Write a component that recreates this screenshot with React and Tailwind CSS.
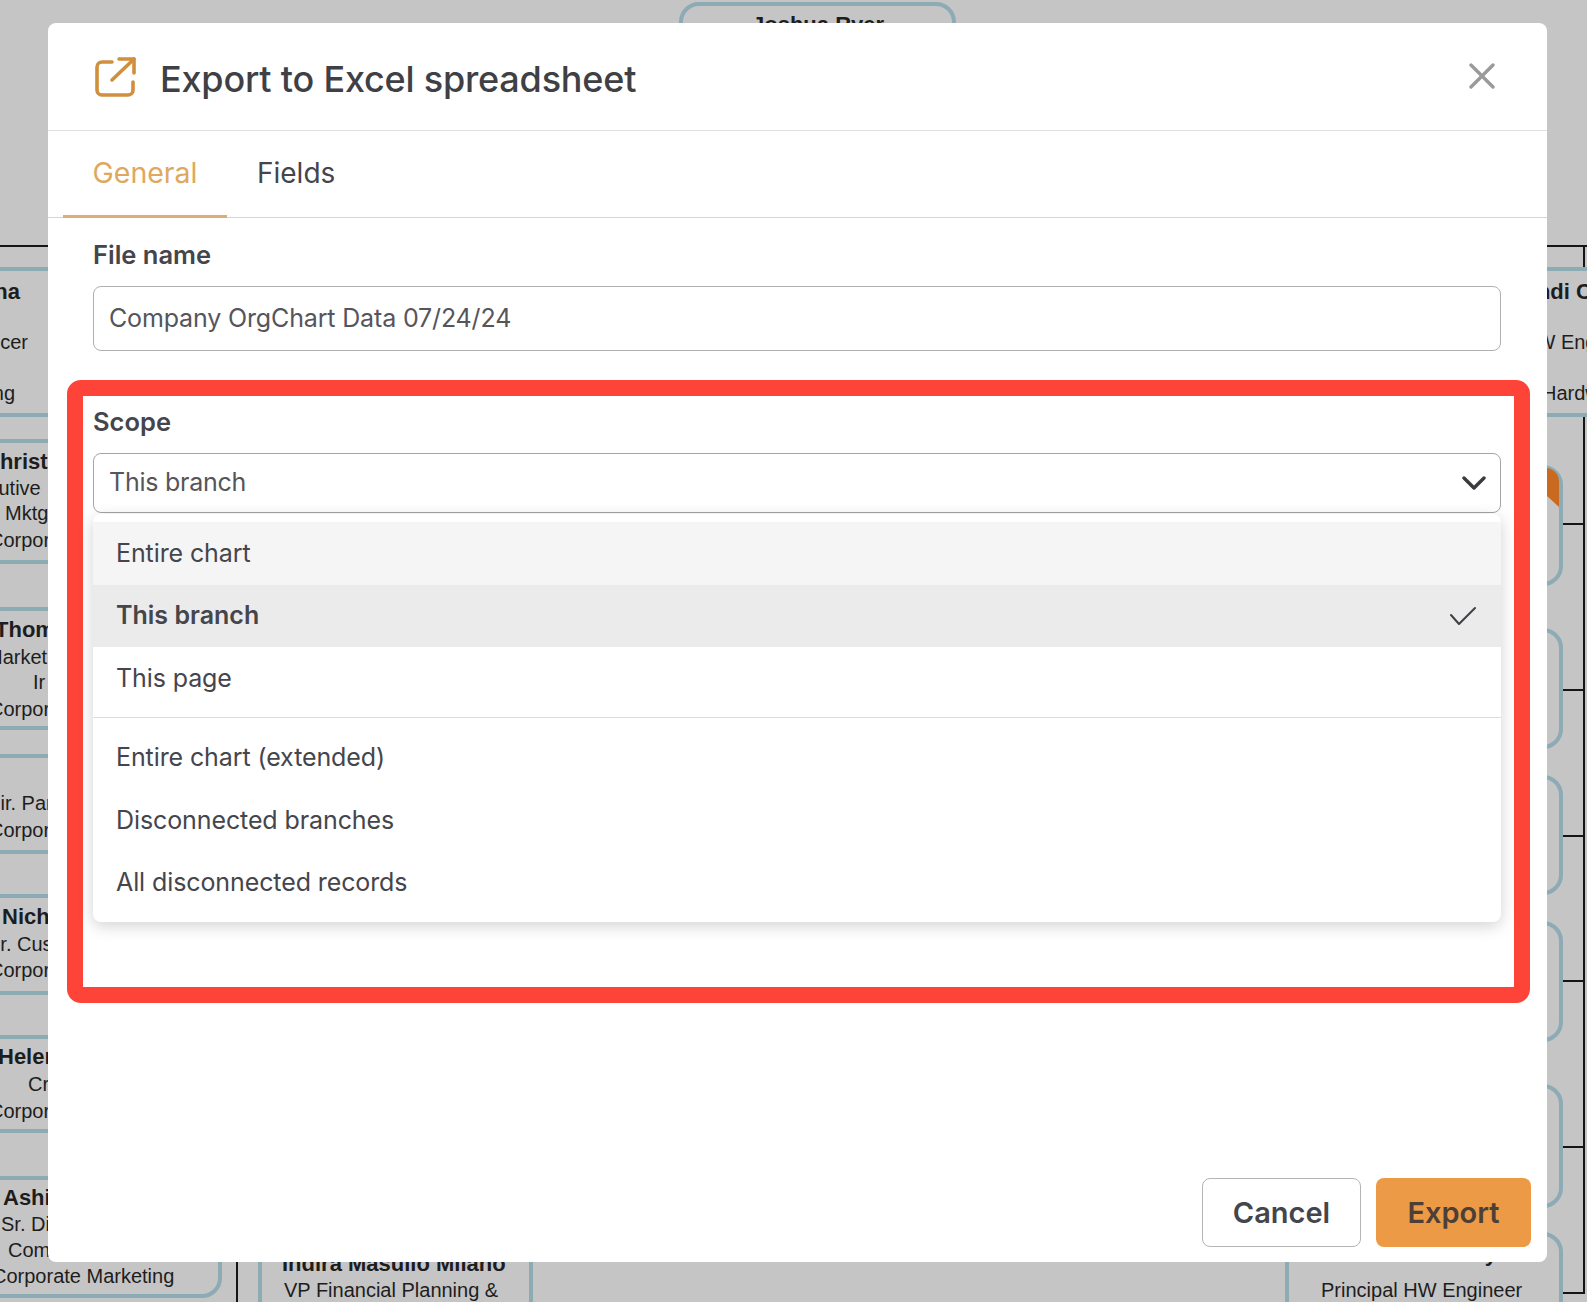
import React from "react";

// org chart behind the dialog, positions are the picture's own canvas
const CARDS = [
  { left: -60, top: 267, w: 282, h: 150 },
  { left: -60, top: 439, w: 282, h: 125 },
  { left: -60, top: 607, w: 282, h: 123 },
  { left: -60, top: 754, w: 282, h: 100 },
  { left: -60, top: 894, w: 282, h: 101 },
  { left: -60, top: 1035, w: 282, h: 98 },
  { left: -60, top: 1176, w: 282, h: 122 },
  { left: 679, top: 2, w: 277, h: 120 },
  { left: 1290, top: 267, w: 360, h: 150 },
  { left: 1290, top: 465, w: 273, h: 121 },
  { left: 1290, top: 628, w: 273, h: 121 },
  { left: 1290, top: 775, w: 273, h: 120 },
  { left: 1290, top: 921, w: 273, h: 121 },
  { left: 1290, top: 1084, w: 273, h: 124 },
  { left: 1285, top: 1232, w: 278, h: 120 },
  { left: 258, top: 1200, w: 275, h: 150 },
];

const LINES = [
  { t: "Joshua Ryer", x: 752, y: 25, b: true },
  { t: "Rebecca Kina", r: 20, y: 292, b: true },
  { t: "Chief Officer", r: 28, y: 342 },
  { t: "Marketing", r: 15, y: 393 },
  { t: "Christ", x: -16, y: 462, b: true },
  { t: "Executive", x: -46, y: 488 },
  { t: "Mktg", x: 5, y: 513 },
  { t: "Corporate", x: -11, y: 540 },
  { t: "Thomas", x: -5, y: 630, b: true },
  { t: "Marketing", x: -14, y: 657 },
  { t: "Ir", x: 33, y: 682 },
  { t: "Corporate", x: -11, y: 709 },
  { t: "Dir. Parts", x: -14, y: 803 },
  { t: "Corporate", x: -11, y: 830 },
  { t: "Nicholas", x: 2, y: 917, b: true },
  { t: "Sr. Customer", x: -13, y: 944 },
  { t: "Corporate", x: -11, y: 970 },
  { t: "Helen", x: -2, y: 1057, b: true },
  { t: "Creative", x: 28, y: 1084 },
  { t: "Corporate", x: -11, y: 1111 },
  { t: "Ashish", x: 3, y: 1198, b: true },
  { t: "Sr. Director", x: 1, y: 1224 },
  { t: "Communications", x: 8, y: 1250 },
  { t: "Corporate Marketing", x: -8, y: 1276 },
  { t: "Indira Masullo Milano", x: 282, y: 1264, b: true },
  { t: "VP Financial Planning &", x: 284, y: 1290 },
  { t: "Kevin Murray", r: 1497, y: 1254, b: true },
  { t: "Principal HW Engineer", x: 1321, y: 1290 },
  { t: "Sandi Chen", x: 1510, y: 292, b: true },
  { t: "HW Engineer", x: 1522, y: 342 },
  { t: "Hardware", x: 1542, y: 393 },
];

const WIRES = [
  { left: 0, top: 245, w: 60, h: 2 },
  { left: 1530, top: 245, w: 57, h: 2 },
  { left: 1583, top: 245, w: 2, h: 22 },
  { left: 1583, top: 417, w: 2, h: 877 },
  { left: 1563, top: 523, w: 20, h: 2 },
  { left: 1563, top: 689, w: 20, h: 2 },
  { left: 1563, top: 835, w: 20, h: 2 },
  { left: 1563, top: 980, w: 20, h: 2 },
  { left: 1563, top: 1146, w: 20, h: 2 },
  { left: 1563, top: 1292, w: 22, h: 2 },
  { left: 236, top: 1250, w: 2, h: 52 },
];

const TOP_OPTIONS = [
  { label: "Entire chart", cls: "bg-[#f5f5f6]" },
  { label: "This branch", cls: "bg-[#ebebeb] font-semibold tracking-normal", checked: true },
  { label: "This page", cls: "" },
];
const MORE_OPTIONS = ["Entire chart (extended)", "Disconnected branches", "All disconnected records"];

function OrgChart() {
  return (
    <div className="absolute inset-0 overflow-hidden font-['Liberation_Sans',sans-serif] text-[20px] leading-[26px] text-[#1d1d1d]">
      {CARDS.map((c, i) => (
        <div
          key={i}
          className="absolute rounded-[20px] border-4 border-[#8dabb5]"
          style={{ left: c.left, top: c.top, width: c.w, height: c.h }}
        />
      ))}
      {WIRES.map((w, i) => (
        <div
          key={i}
          className="absolute bg-[#151515]"
          style={{ left: w.left, top: w.top, width: w.w, height: w.h }}
        />
      ))}
      {LINES.map((l) => (
        <div
          key={l.t + l.y}
          className={`absolute whitespace-nowrap ${l.b ? "text-[22px] font-bold" : ""}`}
          style={l.r !== undefined ? { right: 1587 - l.r, top: l.y - 13 } : { left: l.x, top: l.y - 13 }}
        >
          {l.t}
        </div>
      ))}
      <svg className="absolute left-[1547px] top-[468px]" width="12" height="40" viewBox="0 0 12 40">
        <path d="M0 0 C7 1 12 6 12 14 L12 39 L0 28 Z" fill="#c96a20" />
      </svg>
    </div>
  );
}

function ExportIcon() {
  return (
    <svg width="42" height="42" viewBox="0 0 42 42" fill="none" stroke="#d18f3d" strokeWidth="3.6" strokeLinecap="round" strokeLinejoin="round">
      <path d="M17 6 H7 a5 5 0 0 0 -5 5 V34 a5 5 0 0 0 5 5 H33 a5 5 0 0 0 5 -5 V26" />
      <path d="M17 24 L39 3" />
      <path d="M24 3 H39 V17" />
    </svg>
  );
}

function Option({ label, cls = "", checked }) {
  return (
    <div className={`flex h-[62.5px] items-center justify-between pl-[23px] pr-[25px] ${cls}`}>
      <span>{label}</span>
      {checked && (
        <svg width="26" height="20" viewBox="0 0 26 20" fill="none" stroke="#3f3f46" strokeWidth="2" strokeLinecap="round" strokeLinejoin="round">
          <path d="M1 9 L9 18 L25 2" />
        </svg>
      )}
    </div>
  );
}

export default function App() {
  return (
    <div className="relative h-[1302px] w-[1587px] overflow-hidden bg-[#c5c5c5] pl-[48px] pt-[23px] font-['Inter',sans-serif] text-[#45454c]">
      <OrgChart />

      <div className="relative flex h-[1239px] w-[1499px] flex-col rounded-lg bg-white">
        <div className="flex h-[108px] items-center border-b border-[#e0e0e0] pl-[47px] pr-[52px]">
          <ExportIcon />
          <h1 className="ml-[23px] mt-[5px] text-[36px] font-medium tracking-[-0.2px] text-[#3f3f46]">Export to Excel spreadsheet</h1>
          <button type="button" className="ml-auto mt-[-1px]">
            <svg width="26" height="26" viewBox="0 0 26 26" fill="none" stroke="#9a9a9a" strokeWidth="3.4" strokeLinecap="round">
              <path d="M2 2 L24 24 M24 2 L2 24" />
            </svg>
          </button>
        </div>

        <div className="flex h-[87px] border-b border-[#d5d5d5] pl-[15px]">
          <div className="flex h-[87px] items-center border-b-[3px] border-[#dcae75] px-[29.5px] text-[28.5px] text-[#dea85f]">General</div>
          <div className="flex h-[87px] items-center px-[30px] pb-[3px] text-[28px]">Fields</div>
        </div>

        <div className="flex flex-col pl-[45px] pr-[46px]">
          <label className="mt-[23px] text-[25.5px] font-semibold leading-[28px]">File name</label>
          <div className="mt-[17px] flex h-[65px] items-center rounded-lg border border-[#b0b0b0] px-[15px] text-[25px] tracking-[-0.15px] text-[#55555b]">
            Company OrgChart Data 07/24/24
          </div>

          <div className="ml-[-26px] mr-[-29px] mt-[29px] h-[623px] rounded-[14px] border-[16px] border-[#fe4438] bg-white pl-[10px] pr-[13px]">
            <label className="mt-[12px] block text-[25.5px] font-semibold leading-[28px]">Scope</label>
            <div className="mt-[17px] flex h-[60px] items-center justify-between rounded-lg border border-[#a5a5a5] pl-[15px] pr-[14px] text-[25px] tracking-[-0.25px] text-[#55555b]">
              <span>This branch</span>
              <svg width="24" height="16" viewBox="0 0 24 16" fill="none" stroke="#3a3a40" strokeWidth="3.4" strokeLinecap="round" strokeLinejoin="round">
                <path d="M2 3 L12 13 L22 3" />
              </svg>
            </div>
            <div className="mt-[1px] rounded-lg bg-white py-[8px] text-[25px] tracking-[-0.1px] shadow-[0_4px_16px_rgba(0,0,0,0.18)]">
              {TOP_OPTIONS.map((o) => (
                <Option key={o.label} {...o} />
              ))}
              <div className="mb-[9px] mt-[7px] h-px bg-[#dedede]" />
              {MORE_OPTIONS.map((label) => (
                <Option key={label} label={label} />
              ))}
            </div>
          </div>
        </div>

        <div className="absolute bottom-[15px] right-[16px] flex gap-[15px] text-[29px] font-semibold">
          <button type="button" className="flex h-[69px] w-[159px] items-center justify-center rounded-lg border border-[#b5b5b5] bg-white">
            Cancel
          </button>
          <button type="button" className="flex h-[69px] w-[155px] items-center justify-center rounded-lg bg-[#ec9a45] text-[#4b3f38]">
            Export
          </button>
        </div>
      </div>
    </div>
  );
}
